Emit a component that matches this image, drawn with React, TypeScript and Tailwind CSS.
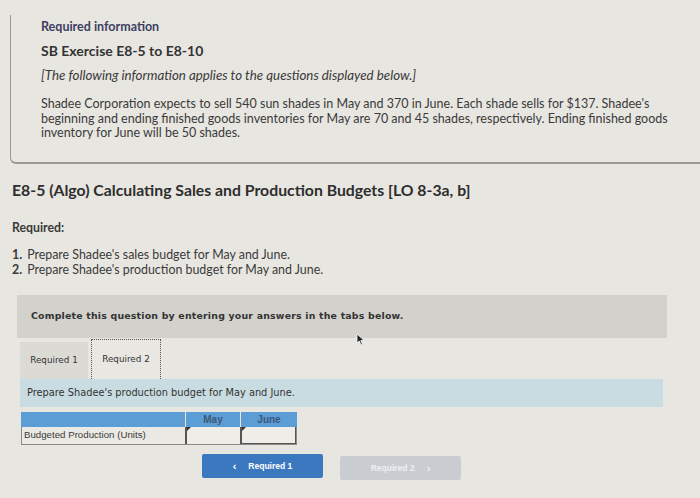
import React from "react";

const body = { fontFamily: "Lato, 'Open Sans', sans-serif" };
const verdana = { fontFamily: "'DejaVu Sans', Verdana, sans-serif" };
const arial = { fontFamily: "'Liberation Sans', Arial, sans-serif" };

const App = () => {
  return (
    <div className="w-[700px] h-[498px] overflow-hidden bg-[#e8e6e1] text-[#3a3a3a] pt-[15px]" style={body}>
      {/* info box */}
      <div className="ml-[10px] h-[149px] border-l border-b-2 border-[#9a9a9a] rounded-bl-md pl-[30px] pt-[3px]">
        <div className="text-[12.5px] font-bold text-[#3c4060] leading-[18px]">Required information</div>
        <div className="mt-[6px] text-[14px] font-bold text-[#333] leading-[18px]">SB Exercise E8-5 to E8-10</div>
        <div className="mt-[6px] text-[13.3px] italic leading-[18px]">
          [The following information applies to the questions displayed below.]
        </div>
        <p className="mt-[13px] text-[12.5px] leading-[14.5px] pr-[20px]">
          Shadee Corporation expects to sell 540 sun shades in May and 370 in June. Each shade sells for $137. Shadee's
          beginning and ending finished goods inventories for May are 70 and 45 shades, respectively. Ending finished goods
          inventory for June will be 50 shades.
        </p>
      </div>

      <div className="pl-[12px]">
        <h2 className="mt-[16px] text-[15.8px] font-bold text-[#2e2e2e] leading-[20px]">
          E8-5 (Algo) Calculating Sales and Production Budgets [LO 8-3a, b]
        </h2>
        <div className="mt-[20px] text-[12.3px] font-bold leading-[16px]">Required:</div>
        <ol className="mt-[12px] text-[12.4px] leading-[14.5px]">
          <li className="flex gap-[5px]">
            <span className="font-bold">1.</span>
            <span>Prepare Shadee's sales budget for May and June.</span>
          </li>
          <li className="flex gap-[5px]">
            <span className="font-bold">2.</span>
            <span>Prepare Shadee's production budget for May and June.</span>
          </li>
        </ol>
      </div>

      {/* question band */}
      <div className="relative ml-[17px] mt-[18px] w-[650px] h-[43px] bg-[#d3d1cc] flex items-center pl-[14px]">
        <span className="text-[9.4px] font-bold text-[#333] tracking-[0.2px]" style={verdana}>
          Complete this question by entering your answers in the tabs below.
        </span>
        <svg className="absolute left-[339px] top-[38px]" width="9" height="13" viewBox="0 0 9 13">
          <path d="M1 1 L1 10 L3.3 8 L5 12 L6.5 11.3 L4.8 7.5 L8 7.3 Z" fill="#222" stroke="#fff" strokeWidth="0.8" />
        </svg>
      </div>

      <div className="ml-[20px] w-[643px]" style={verdana}>
        {/* tabs */}
        <div className="flex items-end gap-[3px] h-[41px]">
          <div className="w-[68px] h-[37px] bg-[#dcdad5] flex items-center justify-center text-[8.8px] text-[#333]">
            Required 1
          </div>
          <div className="w-[70px] h-[40px] bg-[#e9e7e2] border border-dotted border-[#555] border-b-0 flex items-center justify-center text-[8.8px] text-[#333]">
            Required 2
          </div>
        </div>
        <div className="h-[28px] bg-[#c9dce1] flex items-center pl-[7px] text-[9.8px] text-[#333]">
          Prepare Shadee's production budget for May and June.
        </div>

        {/* table */}
        <div className="mt-[5px] w-[276px] ml-[1px]" style={arial}>
          <div className="flex h-[15px] bg-[#5c9dd6] text-[10px] font-bold text-[#3a5878]">
            <div className="w-[164px]" />
            <div className="w-[55px] border-l border-[#e8e6e1] flex items-center justify-center">May</div>
            <div className="w-[57px] border-l border-[#e8e6e1] flex items-center justify-center">June</div>
          </div>
          <div className="flex h-[18px] border border-[#8a8a8a] border-t-0 text-[9.7px]">
            <div className="w-[163px] flex items-center pl-[2px] bg-[#ebe9e4]">Budgeted Production (Units)</div>
            <div className="relative w-[55px] border-l-2 border-[#555] bg-[#efede8]">
              <span className="absolute left-0 top-0 w-0 h-0 border-t-[4px] border-r-[4px] border-t-[#333] border-r-transparent" />
            </div>
            <div className="relative w-[56px] border-l-2 border-[#555] bg-[#efede8] border-r border-b">
              <span className="absolute left-0 top-0 w-0 h-0 border-t-[4px] border-r-[4px] border-t-[#333] border-r-transparent" />
            </div>
          </div>
        </div>

        {/* nav buttons */}
        <div className="mt-[9px] flex items-start gap-[17px] ml-[182px]" style={arial}>
          <button className="w-[121px] h-[24px] bg-[#3b78c0] rounded-[2px] flex items-center justify-center gap-[12px] text-white text-[8.5px] font-bold">
            <span className="text-[11px] leading-none">&lsaquo;</span>
            <span>Required 1</span>
          </button>
          <button className="mt-[2px] w-[121px] h-[24px] bg-[#c9cdd1] rounded-[2px] flex items-center justify-center gap-[12px] text-[#eef0f2] text-[8.5px] font-bold">
            <span>Required 2</span>
            <span className="text-[11px] leading-none">&rsaquo;</span>
          </button>
        </div>
      </div>
    </div>
  );
};

export default App;
